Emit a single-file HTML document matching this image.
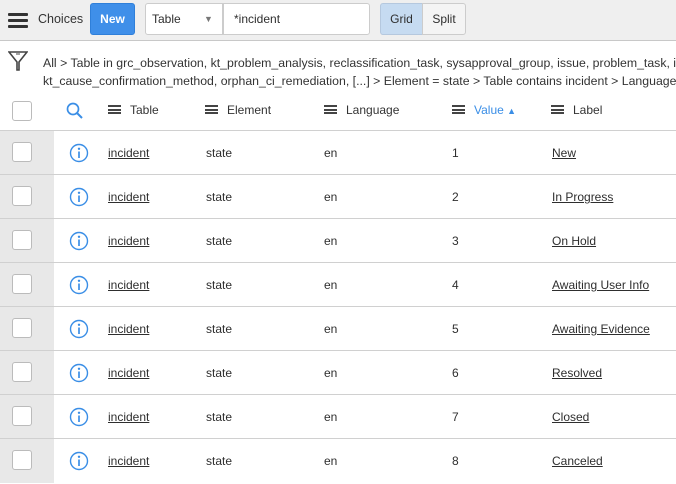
<!DOCTYPE html>
<html><head><style>
*{box-sizing:border-box;margin:0;padding:0}
body{width:676px;height:484px;overflow:hidden;background:#fff;font-family:"Liberation Sans",sans-serif;font-size:12px;color:#2e2e2e;position:relative}
.top{position:absolute;left:0;top:0;width:676px;height:41px;background:#efefef;border-bottom:1px solid #c8c8c8}
.ab{position:absolute}
.hb span{display:block;width:20px;height:3px;background:#333;margin-bottom:3px;border-radius:1px}
.btn{position:absolute;top:3px;height:32px;line-height:30px;text-align:center;border-radius:3px;font-size:12px}
.filt{position:absolute;left:43px;top:54px;white-space:nowrap;font-size:12.3px;line-height:18px;color:#333}
.hdr{position:absolute;top:103px;font-size:12px;color:#333}
.hdr i{display:inline-block;width:13px;height:9px;border-top:2px solid #444;border-bottom:2px solid #444;position:relative;margin-right:9px;vertical-align:0px}
.hdr i:after{content:"";position:absolute;left:0;right:0;top:1.5px;height:2px;background:#444}
.cb{position:absolute;width:20px;height:20px;border:1px solid #bbb;border-radius:3px;background:#fff}
.row{position:absolute;left:0;width:676px;height:44px;border-top:1px solid #d0d0d0}
.row .l{position:absolute;left:0;top:0;width:54px;height:44px;background:#e8e8e8}
.row span{position:absolute;top:15px}
u{text-decoration:underline}
</style></head><body>
<div class="top">
 <div class="ab hb" style="left:8px;top:13px"><span></span><span></span><span></span></div>
 <div class="ab" style="left:38px;top:12px;font-size:12.5px;color:#333">Choices</div>
 <div class="btn" style="left:90px;width:45px;background:#3f8fe9;color:#fff;font-weight:bold;border:1px solid #2f7fd9">New</div>
 <div class="btn" style="left:145px;width:78px;background:#fff;border:1px solid #ccc;text-align:left;padding-left:6px;border-radius:3px 0 0 3px">Table<span style="position:absolute;left:58px;color:#777;font-size:9px">▼</span></div>
 <div class="btn" style="left:223px;width:147px;background:#fff;border:1px solid #ccc;text-align:left;padding-left:10px;border-radius:0 3px 3px 0">*incident</div>
 <div class="btn" style="left:380px;width:43px;background:#c6dbf1;border:1px solid #b5c8de;border-radius:3px 0 0 3px">Grid</div>
 <div class="btn" style="left:422px;width:44px;background:#f4f4f4;border:1px solid #ccc;border-radius:0 3px 3px 0">Split</div>
</div>
<svg class="ab" style="left:8px;top:50px" width="20" height="24" viewBox="0 0 20 24"><path d="M1 2H19L11 12V20H9V12Z" fill="none" stroke="#444" stroke-width="1.6"/><path d="M8 4H12" stroke="#444"/></svg>
<div class="filt">All &gt; Table in grc_observation, kt_problem_analysis, reclassification_task, sysapproval_group, issue, problem_task, i<br>kt_cause_confirmation_method, orphan_ci_remediation, [...] &gt; Element = state &gt; Table contains incident &gt; Language</div>
<div class="cb" style="left:12px;top:101px"></div>
<svg class="ab" style="left:65px;top:101px" width="20" height="20"><circle cx="8" cy="8" r="5.5" fill="none" stroke="#3a8ee6" stroke-width="1.7"/><path d="M12 12L17 17" stroke="#3a8ee6" stroke-width="2"/></svg>
<div class="hdr" style="left:108px"><i></i>Table</div>
<div class="hdr" style="left:205px"><i></i>Element</div>
<div class="hdr" style="left:324px"><i></i>Language</div>
<div class="hdr" style="left:452px;color:#3a8ee6"><i></i>Value <span style="font-size:9px">▲</span></div>
<div class="hdr" style="left:551px"><i></i>Label</div>
<div id="rows"></div>
<script>
var L=["New","In Progress","On Hold","Awaiting User Info","Awaiting Evidence","Resolved","Closed","Canceled"],h="";
for(var i=0;i<8;i++){var y=130+i*44;h+='<div class="row" style="top:'+y+'px"><div class="l"></div><div class="cb" style="left:12px;top:11px"></div><svg style="position:absolute;left:69px;top:12px" width="20" height="20"><circle cx="10" cy="10" r="8.5" fill="none" stroke="#3a8ee6" stroke-width="1.4"/><circle cx="10" cy="5.8" r="1.2" fill="#3a8ee6"/><path d="M10 8.5V15" stroke="#3a8ee6" stroke-width="1.7"/></svg><span style="left:108px"><u>incident</u></span><span style="left:206px">state</span><span style="left:324px">en</span><span style="left:452px">'+(i+1)+'</span><span style="left:552px"><u>'+L[i]+'</u></span></div>';}
document.getElementById("rows").innerHTML=h;
</script>
</body></html>
